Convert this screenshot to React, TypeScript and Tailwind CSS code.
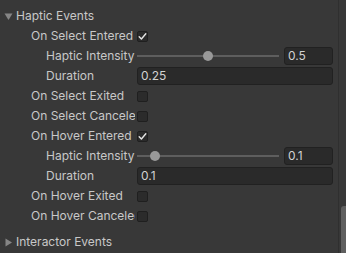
import React from 'react';

type Row =
  | { kind: 'check'; label: string; checked: boolean }
  | { kind: 'slider'; label: string; value: number }
  | { kind: 'field'; label: string; value: string };

const rows: Row[] = [
  { kind: 'check', label: 'On Select Entered', checked: true },
  { kind: 'slider', label: 'Haptic Intensity', value: 0.5 },
  { kind: 'field', label: 'Duration', value: '0.25' },
  { kind: 'check', label: 'On Select Exited', checked: false },
  { kind: 'check', label: 'On Select Canceled', checked: false },
  { kind: 'check', label: 'On Hover Entered', checked: true },
  { kind: 'slider', label: 'Haptic Intensity', value: 0.1 },
  { kind: 'field', label: 'Duration', value: '0.1' },
  { kind: 'check', label: 'On Hover Exited', checked: false },
  { kind: 'check', label: 'On Hover Canceled', checked: false },
];

function Checkbox({ checked }: { checked: boolean }) {
  return (
    <div className="w-[11px] h-[11px] rounded-[2px] bg-[#2b2b2b] border border-[#1f1f1f] flex items-center justify-center">
      {checked && (
        <svg width="9" height="9" viewBox="0 0 9 9" fill="none">
          <path d="M1.2 4.8 L3.4 7 L7.8 1.8" stroke="#e4e4e4" strokeWidth="1.4" strokeLinecap="round" strokeLinejoin="round" />
        </svg>
      )}
    </div>
  );
}

function Field({ value, className }: { value: string; className?: string }) {
  return (
    <div className={`h-[18px] rounded-[3px] bg-[#2a2a2a] border border-[#212121] pl-[3px] flex items-center text-[#d2d2d2] ${className ?? ''}`}>
      {value}
    </div>
  );
}

function Slider({ value }: { value: number }) {
  return (
    <div className="flex items-center gap-[5px]">
      <div className="relative flex-1 h-[18px] flex items-center">
        <div className="w-full h-[2px] bg-[#5e5e5e]" />
        <div
          className="absolute top-1/2 -translate-y-1/2 w-[10px] h-[10px] rounded-full bg-[#999999]"
          style={{ left: `calc(${value} * (100% - 10px))` }}
        />
      </div>
      <Field value={String(value)} className="w-[49px]" />
    </div>
  );
}

function Triangle({ open }: { open: boolean }) {
  return (
    <svg width="9" height="9" viewBox="0 0 9 9">
      {open ? <path d="M0.5 1.5 L8.5 1.5 L4.5 8 Z" fill="#858585" /> : <path d="M1.5 0.5 L8 4.5 L1.5 8.5 Z" fill="#858585" />}
    </svg>
  );
}

export default function App() {
  return (
    <div
      className="w-[346px] h-[253px] bg-[#383838] flex overflow-hidden text-[12px] text-[#c8c8c8]"
      style={{ fontFamily: 'Inter, "Noto Sans", sans-serif' }}
    >
      <div className="flex-1 flex flex-col gap-[2px] pt-[7px]">
        <div className="h-[18px] flex items-center gap-[3px] pl-[4px]">
          <Triangle open />
          <span>Haptic Events</span>
        </div>

        {rows.map((row, i) => {
          const indent = row.kind === 'check' ? 'pl-[31px]' : 'pl-[46px]';
          return (
            <div key={i} className="h-[18px] flex items-center">
              <div className={`w-[137px] pr-[2px] shrink-0 ${indent}`}>
                <div className="overflow-hidden whitespace-nowrap leading-[18px]">{row.label}</div>
              </div>
              <div className="flex-1 pr-[5px]">
                {row.kind === 'check' && <Checkbox checked={row.checked} />}
                {row.kind === 'slider' && <Slider value={row.value} />}
                {row.kind === 'field' && <Field value={row.value} />}
              </div>
            </div>
          );
        })}

        <div className="h-[18px] mt-[6px] flex items-center gap-[3px] pl-[4px]">
          <Triangle open={false} />
          <span>Interactor Events</span>
        </div>
      </div>

      {/* scrollbar */}
      <div className="w-[8px] border-l border-[#2f2f2f] flex flex-col">
        <div className="h-[206px]" />
        <div className="flex-1 ml-[2px] rounded-tl-[3px] bg-[#5f5f5f]" />
      </div>
    </div>
  );
}
